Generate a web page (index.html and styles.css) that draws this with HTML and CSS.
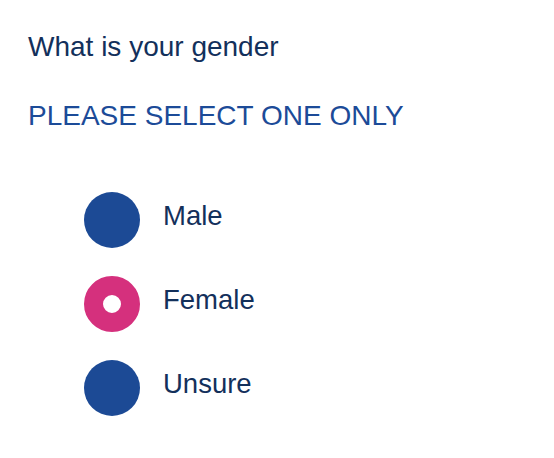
FILE: index.html
```html
<!DOCTYPE html>
<html lang="en">
<head>
<meta charset="utf-8">
<title>Gender</title>
<link rel="stylesheet" href="styles.css">
</head>
<body>
<main class="question">
  <h1 class="title">What is your gender</h1>
  <p class="hint">PLEASE SELECT ONE ONLY</p>
  <ul class="options">
    <li class="option"><span class="radio"></span><span class="label">Male</span></li>
    <li class="option"><span class="radio radio-checked"></span><span class="label">Female</span></li>
    <li class="option"><span class="radio"></span><span class="label">Unsure</span></li>
  </ul>
</main>
</body>
</html>
```
FILE: styles.css
```css
html, body {
  margin: 0;
  padding: 0;
  background: #ffffff;
}
body {
  font-family: "Liberation Sans", Arial, Helvetica, sans-serif;
}
.question {
  padding: 31px 0 0 28px;
}
.title {
  margin: 0;
  font-size: 28px;
  line-height: 32px;
  font-weight: normal;
  color: #13305b;
}
.hint {
  margin: 37px 0 0 0;
  font-size: 28px;
  line-height: 32px;
  color: #1c4b98;
}
.options {
  list-style: none;
  margin: 60px 0 0 56px;
  padding: 0;
  display: flex;
  flex-direction: column;
  gap: 28px;
}
.option {
  display: flex;
  align-items: center;
  gap: 23px;
  height: 56px;
}
.radio {
  box-sizing: border-box;
  width: 56px;
  height: 56px;
  border-radius: 50%;
  background: #1c4a95;
  flex: none;
}
.radio-checked {
  background: #ffffff;
  border: 19px solid #d5307d;
}
.label {
  font-size: 27.5px;
  line-height: 32px;
  color: #13305b;
  padding-bottom: 8px;
}
```
